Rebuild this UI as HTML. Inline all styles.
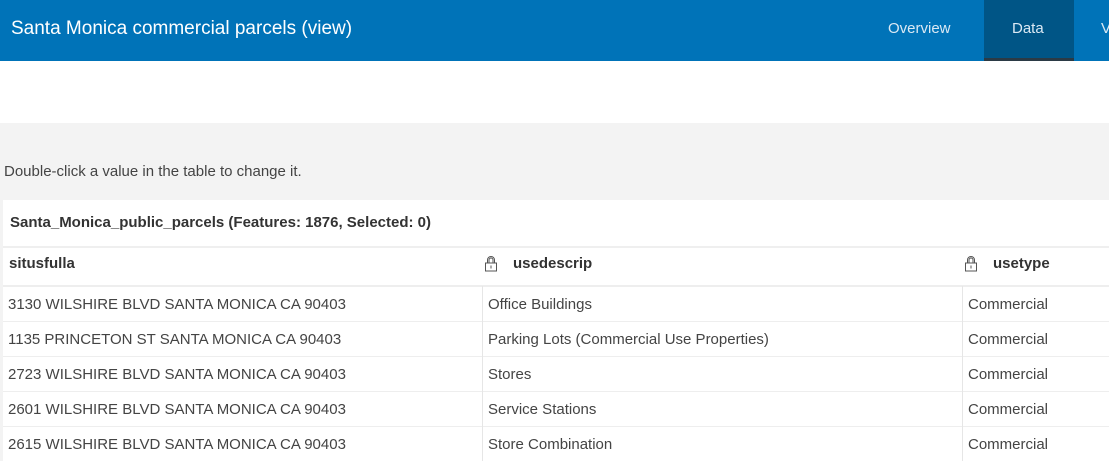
<!DOCTYPE html><html><head><style>
body{margin:0;width:1109px;height:461px;overflow:hidden;background:#f3f3f3;font-family:"Liberation Sans",sans-serif;}
.hdr{position:absolute;left:0;top:0;width:1109px;height:61px;background:#0073b8;color:#fff}
.hdr .t{position:absolute;left:11px;top:18px;font-size:19px;font-weight:300}
.tab{position:absolute;top:20px;font-size:15px;color:#dbe9f4}
.data{position:absolute;left:984px;top:0;width:90px;height:58px;background:#005586;border-bottom:3px solid #2b3a45}
.white{position:absolute;top:61px;left:0;width:1109px;height:62px;background:#fff}
.hint{position:absolute;left:4px;top:163px;font-size:15px;color:#444}
.tbl{position:absolute;left:3px;top:200px;width:1106px;height:261px;background:#fff}
.cap{position:absolute;left:7px;top:14px;font-size:15px;font-weight:bold;color:#333}
.hl{position:absolute;left:0;width:1106px;height:2px;background:#efefef}
.th{position:absolute;top:55px;font-size:15px;font-weight:bold;color:#333}
.lk{position:absolute;top:55px}
.row{position:absolute;left:0;width:1106px;height:34px;border-top:1px solid #eee;font-size:15px;color:#444}
.row span{position:absolute;top:9px}
.vl{position:absolute;top:86px;width:1px;height:175px;background:#e6e6e6}
</style></head><body>
<div class="hdr"><div class="t">Santa Monica commercial parcels (view)</div>
<div class="data"></div>
<div class="tab" style="left:888px">Overview</div>
<div class="tab" style="left:1012px">Data</div>
<div class="tab" style="left:1101px">V</div></div>
<div class="white"></div>
<div class="hint">Double-click a value in the table to change it.</div>
<div class="tbl">
<div class="cap">Santa_Monica_public_parcels (Features: 1876, Selected: 0)</div>
<div class="hl" style="top:46px"></div>
<div class="th" style="left:6px">situsfulla</div>
<svg class="lk" style="left:481px" width="14" height="17" viewBox="0 0 14 17"><path d="M3.5 8V5a3.5 3.5 0 0 1 7 0v3M5 8V5a2 2 0 0 1 4 0v3" fill="none" stroke="#555" stroke-width="1"/><rect x="1.5" y="8" width="11" height="8" fill="none" stroke="#555"/><path d="M7 10.5v3" stroke="#555"/></svg>
<div class="th" style="left:510px">usedescrip</div>
<svg class="lk" style="left:961px" width="14" height="17" viewBox="0 0 14 17"><path d="M3.5 8V5a3.5 3.5 0 0 1 7 0v3M5 8V5a2 2 0 0 1 4 0v3" fill="none" stroke="#555" stroke-width="1"/><rect x="1.5" y="8" width="11" height="8" fill="none" stroke="#555"/><path d="M7 10.5v3" stroke="#555"/></svg>
<div class="th" style="left:990px">usetype</div>
<div class="row" style="top:85px;border-top:2px solid #eee"><span style="left:5px">3130 WILSHIRE BLVD SANTA MONICA CA 90403</span><span style="left:485px">Office Buildings</span><span style="left:965px">Commercial</span></div>
<div class="row" style="top:121px"><span style="left:5px">1135 PRINCETON ST SANTA MONICA CA 90403</span><span style="left:485px">Parking Lots (Commercial Use Properties)</span><span style="left:965px">Commercial</span></div>
<div class="row" style="top:156px"><span style="left:5px">2723 WILSHIRE BLVD SANTA MONICA CA 90403</span><span style="left:485px">Stores</span><span style="left:965px">Commercial</span></div>
<div class="row" style="top:191px"><span style="left:5px">2601 WILSHIRE BLVD SANTA MONICA CA 90403</span><span style="left:485px">Service Stations</span><span style="left:965px">Commercial</span></div>
<div class="row" style="top:226px"><span style="left:5px">2615 WILSHIRE BLVD SANTA MONICA CA 90403</span><span style="left:485px">Store Combination</span><span style="left:965px">Commercial</span></div>
<div class="vl" style="left:479px"></div><div class="vl" style="left:959px"></div>
</div>
</body></html>
